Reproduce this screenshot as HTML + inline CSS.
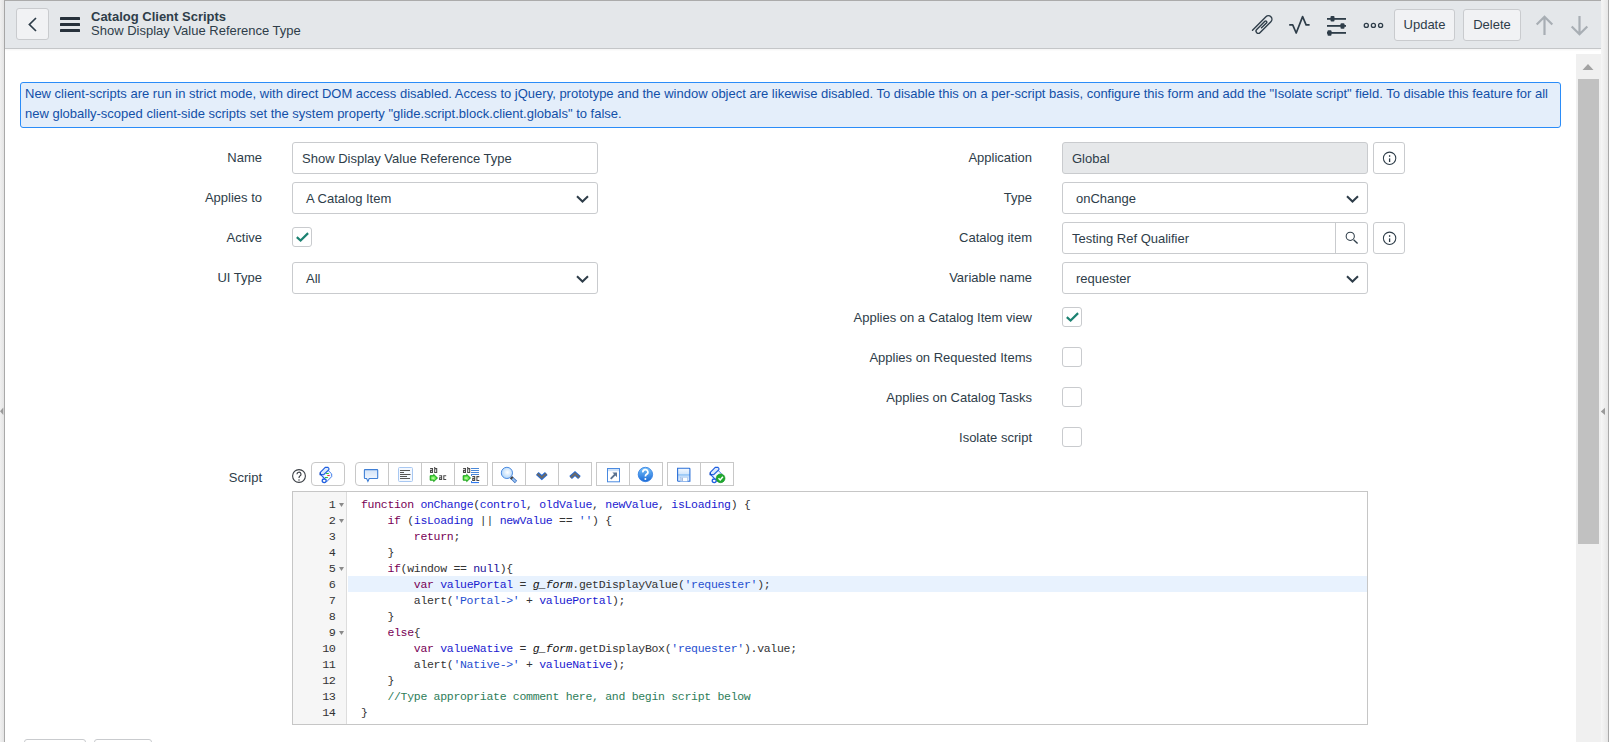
<!DOCTYPE html>
<html><head><meta charset="utf-8">
<style>
*{box-sizing:border-box}
html,body{margin:0;padding:0}
body{width:1609px;height:742px;overflow:hidden;position:relative;background:#fff;font-family:"Liberation Sans",sans-serif;font-size:13px;color:#2e3d49}
.abs{position:absolute}
#lstrip{left:0;top:0;width:5px;height:742px;background:linear-gradient(to right,#f0f0f0,#e4e4e4);border-right:1px solid #a9a9a9}
#rstrip{left:1601px;top:0;width:8px;height:742px;background:linear-gradient(to right,#f6f6f6,#e6e6e6);border-right:1px solid #a9a9a9}
#hdr{left:5px;top:0;width:1596px;height:49px;background:#e4e7ea;border-top:1px solid #ababab;border-bottom:1px solid #c4c6c8;box-shadow:0 1px 2px rgba(0,0,0,0.05)}
.btn{position:absolute;background:#f1f2f4;border:1px solid #c9cbce;border-radius:3px;color:#2e3d49;font-size:13px;text-align:center;line-height:30px}
.lbl{position:absolute;text-align:right;white-space:nowrap;line-height:20px;color:#2e3d49}
.inp{position:absolute;height:32px;border:1px solid #c9cbce;border-radius:3px;background:#fff;line-height:32px;padding-left:9px;white-space:nowrap;color:#2e3d49}
.chev{position:absolute;right:8px;top:12px;width:13px;height:8px}
.cb{position:absolute;width:20px;height:20px;border:1px solid #c9cbce;border-radius:3px;background:#fff}
#sb{left:1576px;top:54px;width:25px;height:688px;background:#f0f0f0}
#thumb{left:1578px;top:79px;width:21px;height:465px;background:#c1c1c1}
.tb{position:absolute;top:462px;height:24px;border:1px solid #c6c6c6;border-radius:4px;background:#fff}
.tbb{position:absolute;top:0;height:22px;width:33px;border-left:1px solid #c6c6c6}
.tbb:first-child{border-left:none}
.tg{position:absolute;top:462px;height:24px;border:1px solid #c8c8c8;background:#fff}
.tg i{position:absolute;top:0;width:1px;height:22px;background:#c8c8c8}
#ed{left:292px;top:491px;width:1076px;height:234px;border:1px solid #c6c6c6;background:#fff}
#gut{left:0;top:0;width:54px;height:232px;background:#f6f6f6;border-right:1px solid #dddddd}
.code{font-family:"Liberation Mono",monospace;font-size:11.5px;letter-spacing:-0.3px;line-height:16px;white-space:pre}
.ln{position:absolute;left:0;width:42.5px;text-align:right;color:#333;margin-top:0.5px;font-size:11.8px;letter-spacing:-0.4px}
.fold{position:absolute;left:45.6px;width:5px;height:4px}
.cl{position:absolute;left:68px;color:#333;margin-top:1px}
.k{color:#770055}.v{color:#1a1ad0}.s{color:#1f4fd0}.c{color:#2e7d59}.a{color:#221199}.i{font-style:italic;color:#111}
</style></head><body>
<div id="lstrip" class="abs"></div>
<div id="rstrip" class="abs"></div>
<svg class="abs" style="left:0;top:407px" width="4" height="9" viewBox="0 0 4 9"><path d="M0 4.3 L3.3 0.6 L3.3 8 Z" fill="#9a9a9a"/></svg>
<svg class="abs" style="left:1600px;top:407px" width="6" height="9" viewBox="0 0 6 9"><path d="M0.8 4.4 L5 0.8 L5 8 Z" fill="#9a9a9a"/></svg>
<div id="hdr" class="abs"></div>

<!-- header left -->
<div class="btn" style="left:16px;top:8px;width:33px;height:32px"></div>
<svg class="abs" style="left:16px;top:8px" width="33" height="32" viewBox="0 0 33 32"><path d="M20 10 L13.4 16.5 L20 23" fill="none" stroke="#2e3d49" stroke-width="1.7"/></svg>
<svg class="abs" style="left:60px;top:15px" width="20" height="18" viewBox="0 0 20 18"><rect x="0" y="2" width="20" height="3" rx="0.6" fill="#27313b"/><rect x="0" y="8" width="20" height="3" rx="0.6" fill="#27313b"/><rect x="0" y="14" width="20" height="3" rx="0.6" fill="#27313b"/></svg>
<div class="abs" style="left:91px;top:9px;font-weight:bold;line-height:15px;white-space:nowrap">Catalog Client Scripts</div>
<div class="abs" style="left:91px;top:23px;line-height:15px;white-space:nowrap">Show Display Value Reference Type</div>

<!-- header right icons -->
<svg class="abs" style="left:1248px;top:10px" width="30" height="30" viewBox="0 0 30 30"><g transform="translate(4.5 20.2) rotate(-45)" fill="none" stroke="#2e3d49" stroke-width="1.4" stroke-linecap="round"><path d="M0 0 L19 0 A3.5 3.5 0 0 1 19 7 L3.5 7 A2.25 2.25 0 0 1 3.5 2.5 L15 2.5 A1.1 1.1 0 0 1 15 4.7 L8 4.7"/></g></svg>
<svg class="abs" style="left:1288px;top:14px" width="23" height="22" viewBox="0 0 23 22"><path d="M1.2 10.9 L4.7 10.9 L8.2 19 L14.6 2.6 L18.1 10.9 L21.6 10.9" fill="none" stroke="#2e3d49" stroke-width="1.7" stroke-linejoin="round"/></svg>
<svg class="abs" style="left:1326px;top:15px" width="22" height="22" viewBox="0 0 22 22"><g fill="#2e3d49"><rect x="1" y="3" width="19" height="1.8"/><rect x="1" y="10" width="19" height="1.8"/><rect x="1" y="17" width="19" height="1.8"/><rect x="4.5" y="1" width="4" height="5.5" rx="1"/><rect x="14.5" y="8.3" width="4" height="5.5" rx="1"/><rect x="1.5" y="15.2" width="4" height="5.5" rx="1"/></g></svg>
<svg class="abs" style="left:1362px;top:20px" width="23" height="11" viewBox="0 0 23 11"><g fill="none" stroke="#2e3d49" stroke-width="1.3"><circle cx="4.3" cy="5.4" r="2.05"/><circle cx="11.4" cy="5.4" r="2.05"/><circle cx="18.6" cy="5.4" r="2.05"/></g></svg>
<svg class="abs" style="left:1534px;top:14px" width="22" height="23" viewBox="0 0 22 23"><path d="M10.5 21 L10.5 3 M2.7 10.5 L10.5 2.7 L18.3 10.5" fill="none" stroke="#a8aeb4" stroke-width="2.2"/></svg>
<svg class="abs" style="left:1569px;top:14px" width="22" height="23" viewBox="0 0 22 23"><path d="M10.5 2 L10.5 20 M2.7 12.5 L10.5 20.3 L18.3 12.5" fill="none" stroke="#a8aeb4" stroke-width="2.2"/></svg>
<!-- header right -->
<div class="btn" style="left:1394px;top:9px;width:61px;height:32px">Update</div>
<div class="btn" style="left:1463px;top:9px;width:58px;height:32px">Delete</div>

<!-- scrollbar -->
<div id="sb" class="abs"></div>
<svg class="abs" style="left:1582px;top:63px" width="12" height="8" viewBox="0 0 12 8"><path d="M0.5 7 L6 1 L11.5 7 Z" fill="#a3a3a3"/></svg>
<div id="thumb" class="abs"></div>

<!-- info box -->
<div class="abs" style="left:20px;top:82px;width:1541px;height:46px;border:1px solid #2a8cf8;border-radius:3px;background:#e4eefa;color:#1250a8;padding:1px 0 0 4px;line-height:20px">New client-scripts are run in strict mode, with direct DOM access disabled. Access to jQuery, prototype and the window object are likewise disabled. To disable this on a per-script basis, configure this form and add the "Isolate script" field. To disable this feature for all new globally-scoped client-side scripts set the system property "glide.script.block.client.globals" to false.</div>

<!-- left column -->
<div class="lbl" style="right:1347px;top:148px">Name</div>
<div class="inp" style="left:292px;top:142px;width:306px">Show Display Value Reference Type</div>
<div class="lbl" style="right:1347px;top:188px">Applies to</div>
<div class="inp" style="left:292px;top:182px;width:306px;padding-left:13px">A Catalog Item<svg class="chev" viewBox="0 0 13 8"><path d="M1 1.2 L6.5 6.5 L12 1.2" fill="none" stroke="#2e3d49" stroke-width="2"/></svg></div>
<div class="lbl" style="right:1347px;top:228px">Active</div>
<div class="cb" style="left:292px;top:227px"><svg class="abs" style="left:0;top:0" width="18" height="18" viewBox="0 0 18 18"><path d="M3.8 9.1 L7.6 12.5 L15.1 5.1" fill="none" stroke="#1c8272" stroke-width="2.2"/></svg></div>
<div class="lbl" style="right:1347px;top:268px">UI Type</div>
<div class="inp" style="left:292px;top:262px;width:306px;padding-left:13px">All<svg class="chev" viewBox="0 0 13 8"><path d="M1 1.2 L6.5 6.5 L12 1.2" fill="none" stroke="#2e3d49" stroke-width="2"/></svg></div>

<!-- right column -->
<div class="lbl" style="right:577px;top:148px">Application</div>
<div class="inp" style="left:1062px;top:142px;width:306px;background:#e6e8ea">Global</div>
<div class="btn" style="left:1373px;top:142px;width:32px;height:32px;background:#fff"></div>
<svg class="abs" style="left:1373px;top:142px" width="32" height="32" viewBox="0 0 32 32"><circle cx="16.6" cy="16.3" r="6.2" fill="none" stroke="#2e3d49" stroke-width="1.05"/><rect x="15.95" y="13.2" width="1.3" height="1.6" fill="#2e3d49"/><rect x="15.95" y="16.4" width="1.3" height="3.6" fill="#2e3d49"/></svg>
<div class="lbl" style="right:577px;top:188px">Type</div>
<div class="inp" style="left:1062px;top:182px;width:306px;padding-left:13px">onChange<svg class="chev" viewBox="0 0 13 8"><path d="M1 1.2 L6.5 6.5 L12 1.2" fill="none" stroke="#2e3d49" stroke-width="2"/></svg></div>
<div class="lbl" style="right:577px;top:228px">Catalog item</div>
<div class="inp" style="left:1062px;top:222px;width:306px">Testing Ref Qualifier</div>
<div class="abs" style="left:1335px;top:223px;width:1px;height:30px;background:#c9cbce"></div>
<div class="btn" style="left:1373px;top:222px;width:32px;height:32px;background:#fff"></div>
<svg class="abs" style="left:1373px;top:222px" width="32" height="32" viewBox="0 0 32 32"><circle cx="16.6" cy="16.3" r="6.2" fill="none" stroke="#2e3d49" stroke-width="1.05"/><rect x="15.95" y="13.2" width="1.3" height="1.6" fill="#2e3d49"/><rect x="15.95" y="16.4" width="1.3" height="3.6" fill="#2e3d49"/></svg>
<svg class="abs" style="left:1336px;top:223px" width="31" height="30" viewBox="0 0 31 30"><circle cx="14.25" cy="13.35" r="4.1" fill="none" stroke="#2e3d49" stroke-width="1.05"/><path d="M17.6 16.8 L21.6 20.5" stroke="#2e3d49" stroke-width="1.3" fill="none"/></svg>
<div class="lbl" style="right:577px;top:268px">Variable name</div>
<div class="inp" style="left:1062px;top:262px;width:306px;padding-left:13px">requester<svg class="chev" viewBox="0 0 13 8"><path d="M1 1.2 L6.5 6.5 L12 1.2" fill="none" stroke="#2e3d49" stroke-width="2"/></svg></div>
<div class="lbl" style="right:577px;top:308px">Applies on a Catalog Item view</div>
<div class="cb" style="left:1062px;top:307px"><svg class="abs" style="left:0;top:0" width="18" height="18" viewBox="0 0 18 18"><path d="M3.8 9.1 L7.6 12.5 L15.1 5.1" fill="none" stroke="#1c8272" stroke-width="2.2"/></svg></div>
<div class="lbl" style="right:577px;top:348px">Applies on Requested Items</div>
<div class="cb" style="left:1062px;top:347px"></div>
<div class="lbl" style="right:577px;top:388px">Applies on Catalog Tasks</div>
<div class="cb" style="left:1062px;top:387px"></div>
<div class="lbl" style="right:577px;top:428px">Isolate script</div>
<div class="cb" style="left:1062px;top:427px"></div>

<!-- script -->
<!-- toolbar -->
<svg class="abs" style="left:291px;top:468px" width="16" height="16" viewBox="0 0 16 16"><circle cx="8" cy="8" r="6.4" fill="none" stroke="#3a3f45" stroke-width="1.1"/><path d="M6 6.3 A2 2 0 1 1 8.9 8 C8.2 8.4 8 8.9 8 10" fill="none" stroke="#3a3f45" stroke-width="1.2"/><circle cx="8" cy="12" r="0.75" fill="#3a3f45"/></svg>
<div class="tg" style="left:311px;width:34px;border-radius:4px"></div>
<svg class="abs" style="left:311px;top:462px" width="34" height="24" viewBox="0 0 34 24">
 <defs>
  <linearGradient id="gs" x1="0" y1="0" x2="1" y2="1"><stop offset="0" stop-color="#ffffff"/><stop offset="1" stop-color="#b9d6fb"/></linearGradient>
  <g id="scroll">
   <path d="M4.5 10.4 L8.8 14.9 L11.2 17.6 L15.7 12.6 L15.7 10 L11.9 6.4 Z" fill="#f1f7ff"/>
   <path d="M4.5 10.4 L8.8 14.9" fill="none" stroke="#1f5fe0" stroke-width="1.2"/>
   <path d="M12 6.3 L15.7 9.9 L15.7 12.6 L10.4 18" fill="none" stroke="#3070e8" stroke-width="0.9"/>
   <path d="M4.3 8.4 L9.3 3.4 L11.9 3.2 L12.9 4.4 L12.9 5.7 L7.7 10.7 L4.3 10.4 Z" fill="url(#gs)" stroke="#1f5fe0" stroke-width="1.1"/>
   <path d="M4.3 8.6 L4.3 10.6 L5.6 10.6" fill="none" stroke="#1448c8" stroke-width="1.4"/>
   <ellipse cx="8.2" cy="16.8" rx="2" ry="1.8" fill="#fff" stroke="#1f5fe0" stroke-width="1.3"/>
  </g>
 </defs>
 <g transform="translate(5 2)">
  <use href="#scroll"/>
  <rect x="10.1" y="9.1" width="2.7" height="0.9" fill="#1fc01f"/>
  <rect x="11.3" y="11" width="2.4" height="0.9" fill="#e8201a"/>
  <rect x="8.9" y="13.1" width="3" height="0.9" fill="#1fc01f"/>
 </g>
</svg>

<div class="tg" style="left:355px;width:133px;border-radius:4px 0 0 4px"><i style="left:32px"></i><i style="left:65px"></i><i style="left:98px"></i></div>
<svg class="abs" style="left:355px;top:462px" width="133" height="24" viewBox="0 0 133 24">
 <defs>
  <linearGradient id="gb" x1="0" y1="0" x2="0" y2="1"><stop offset="0" stop-color="#d3e3f8"/><stop offset="1" stop-color="#f8fbff"/></linearGradient>
  <radialGradient id="gr" cx="0.4" cy="0.55" r="0.6"><stop offset="0" stop-color="#c8ffb0"/><stop offset="0.6" stop-color="#4fe03a"/><stop offset="1" stop-color="#18b818"/></radialGradient>
 </defs>
 <!-- comment -->
 <path d="M10 7.6 Q9.4 7.6 9.4 8.3 L9.4 15.8 Q9.4 16.5 10 16.5 L11.6 16.5 L12.9 19.4 L14.2 16.5 L22.1 16.5 Q22.7 16.5 22.7 15.8 L22.7 8.3 Q22.7 7.6 22.1 7.6 Z" fill="url(#gb)" stroke="#3f7fd6" stroke-width="1.1"/>
 <!-- format -->
 <rect x="43.5" y="5.5" width="14" height="14" rx="1" fill="#f4f8fe" stroke="#a8c8f2" stroke-width="1"/>
 <g fill="#555"><rect x="45" y="8" width="10" height="1"/><rect x="45" y="10" width="4" height="1"/><rect x="45" y="12" width="10.5" height="1"/><rect x="45" y="14" width="7" height="1"/><rect x="45" y="16" width="10" height="1"/></g>
 <!-- replace -->
 <path d="M75.10 6.60 H77.50 V10.40 H75.50 V8.60 H77.50 M79.70 5.00 V10.40 H81.70 V6.60 H79.70" fill="none" stroke="#4a4a4a" stroke-width="1.05"/>
 <path d="M75.20 13.70 L78.70 13.70 L78.70 12.40 L82.50 16.00 L78.70 19.60 L78.70 18.20 L75.20 18.20 Z" fill="url(#gr)" stroke="#0c9c0c" stroke-width="0.9"/>
 <path d="M84.20 13.70 H86.60 V17.50 H84.60 V15.70 H86.60 M91.20 13.70 H88.80 V17.50 H91.20" fill="none" stroke="#4a4a4a" stroke-width="1.05"/>
 <path d="M108.10 6.60 H110.50 V10.40 H108.50 V8.60 H110.50 M112.70 5.00 V10.40 H114.70 V6.60 H112.70" fill="none" stroke="#4a4a4a" stroke-width="1.05"/>
 <g fill="#4a88d8"><rect x="116" y="6" width="8" height="1"/><rect x="116" y="8" width="8" height="1"/><rect x="116" y="10" width="8" height="1"/><rect x="116" y="12" width="8" height="1"/><rect x="116" y="12" width="1" height="2"/><rect x="116" y="19" width="1" height="2"/><rect x="116" y="20" width="8" height="1.1" fill="#2f7af0"/></g>
 <path d="M108.20 13.70 L111.70 13.70 L111.70 12.40 L115.50 16.00 L111.70 19.60 L111.70 18.20 L108.20 18.20 Z" fill="url(#gr)" stroke="#0c9c0c" stroke-width="0.9"/>
 <path d="M117.30 14.60 H119.70 V18.40 H117.70 V16.60 H119.70 M124.30 14.60 H121.90 V18.40 H124.30" fill="none" stroke="#4a4a4a" stroke-width="1.05"/>
</svg>

<div class="tg" style="left:492px;width:100px;border-radius:0"><i style="left:32px"></i><i style="left:65px"></i></div>
<svg class="abs" style="left:492px;top:462px" width="100" height="24" viewBox="0 0 100 24">
 <defs><radialGradient id="gm" cx="0.55" cy="0.45" r="0.6"><stop offset="0" stop-color="#ffffff"/><stop offset="1" stop-color="#a9d2fa"/></radialGradient></defs>
 <circle cx="14.9" cy="10.9" r="5.6" fill="url(#gm)" stroke="#4a8ae0" stroke-width="1"/>
 <path d="M19.2 15.4 L24 20" stroke="#3b6fbf" stroke-width="3.2" stroke-linecap="butt"/>
 <path d="M19.7 15.9 L23.6 19.6" stroke="#9cc6f5" stroke-width="1.6"/>
 <path d="M19 15.2 L20.4 16.6" stroke="#444" stroke-width="3"/>
 <path d="M45.3 11.6 L49.8 15.6 L54.3 11.6" fill="none" stroke="#1e6be0" stroke-width="4" stroke-linejoin="miter" stroke-miterlimit="3"/>
 <path d="M45.3 11.6 L49.8 15.6 L54.3 11.6" fill="none" stroke="#6a6a6a" stroke-width="2.2" stroke-linejoin="miter" stroke-miterlimit="3"/>
 <path d="M78.6 15.6 L83 11.6 L87.4 15.6" fill="none" stroke="#1e6be0" stroke-width="4" stroke-linejoin="miter" stroke-miterlimit="3"/>
 <path d="M78.6 15.6 L83 11.6 L87.4 15.6" fill="none" stroke="#6a6a6a" stroke-width="2.2" stroke-linejoin="miter" stroke-miterlimit="3"/>
</svg>

<div class="tg" style="left:596px;width:67px;border-radius:0"><i style="left:32px"></i></div>
<svg class="abs" style="left:596px;top:462px" width="67" height="24" viewBox="0 0 67 24">
 <defs><linearGradient id="gh" x1="0" y1="0" x2="0" y2="1"><stop offset="0" stop-color="#79c3fb"/><stop offset="1" stop-color="#1868d6"/></linearGradient></defs>
 <rect x="11.5" y="6.5" width="12" height="13.3" fill="#fff" stroke="#4a8ae0" stroke-width="1"/>
 <rect x="12" y="7" width="11" height="2.2" fill="#cfe2f8"/>
 <path d="M14.7 16.8 L20 11.5" stroke="#5b7290" stroke-width="1.8"/>
 <path d="M16.4 10.6 L21 10.6 L21 15.2 Z" fill="#5b7290"/>
 <circle cx="49.4" cy="12.5" r="7.2" fill="url(#gh)" stroke="#2a78e0" stroke-width="0.8"/>
 <path d="M46.9 10.4 A2.5 2.5 0 1 1 50.5 12.3 C49.6 12.9 49.4 13.4 49.4 14.6" fill="none" stroke="#fff" stroke-width="1.7"/>
 <circle cx="49.4" cy="17" r="1" fill="#fff"/>
</svg>

<div class="tg" style="left:667px;width:67px;border-radius:0"><i style="left:32px"></i></div>
<svg class="abs" style="left:667px;top:462px" width="67" height="24" viewBox="0 0 67 24">
 <defs><linearGradient id="gf" x1="0" y1="0" x2="0" y2="1"><stop offset="0" stop-color="#f4f9ff"/><stop offset="0.4" stop-color="#d6e8fc"/><stop offset="0.5" stop-color="#8cc2f6"/><stop offset="0.62" stop-color="#c6def9"/><stop offset="1" stop-color="#e6f0fc"/></linearGradient></defs>
 <path d="M10.6 6.3 L22.4 6.3 L22.9 6.8 L22.9 19.3 L11.1 19.3 L10.6 18.8 Z" fill="url(#gf)" stroke="#2a6fd8" stroke-width="1.1"/>
 <rect x="13.6" y="15.2" width="6.8" height="4.1" fill="#fff" stroke="#9cc0ee" stroke-width="0.6"/>
 <rect x="14.6" y="15.8" width="1" height="3.2" fill="#6a8fc8"/>
 <g transform="translate(39 2)"><use href="#scroll"/></g>
 <circle cx="53.6" cy="16.3" r="4.4" fill="#1faa2f" stroke="#138a20" stroke-width="0.6"/>
 <path d="M51.5 16.3 L53.2 18 L55.9 14.8" fill="none" stroke="#fff" stroke-width="1.5"/>
</svg>

<div class="lbl" style="right:1347px;top:468px">Script</div>

<div id="ed" class="abs">
 <div id="gut" class="abs"></div>
<div class="code ln" style="top:4px">1</div>
<svg class="fold" style="top:11px" viewBox="0 0 5 4"><path d="M0 0 L5 0 L2.5 4Z" fill="#8a8a8a"/></svg>
<div class="code cl" style="top:4px"><span class="k">function</span> <span class="v">onChange</span>(<span class="v">control</span>, <span class="v">oldValue</span>, <span class="v">newValue</span>, <span class="v">isLoading</span>) {</div>
<div class="code ln" style="top:20px">2</div>
<svg class="fold" style="top:27px" viewBox="0 0 5 4"><path d="M0 0 L5 0 L2.5 4Z" fill="#8a8a8a"/></svg>
<div class="code cl" style="top:20px">    <span class="k">if</span> (<span class="v">isLoading</span> || <span class="v">newValue</span> == <span class="s">''</span>) {</div>
<div class="code ln" style="top:36px">3</div>
<div class="code cl" style="top:36px">        <span class="k">return</span>;</div>
<div class="code ln" style="top:52px">4</div>
<div class="code cl" style="top:52px">    }</div>
<div class="code ln" style="top:68px">5</div>
<svg class="fold" style="top:75px" viewBox="0 0 5 4"><path d="M0 0 L5 0 L2.5 4Z" fill="#8a8a8a"/></svg>
<div class="code cl" style="top:68px">    <span class="k">if</span>(window == <span class="a">null</span>){</div>
<div class="abs" style="left:55px;top:84px;width:1019px;height:16px;background:#e8f2fe"></div>
<div class="code ln" style="top:84px">6</div>
<div class="code cl" style="top:84px">        <span class="k">var</span> <span class="v">valuePortal</span> = <span class="i">g_form</span>.getDisplayValue(<span class="s">'requester'</span>);</div>
<div class="code ln" style="top:100px">7</div>
<div class="code cl" style="top:100px">        alert(<span class="s">'Portal-&gt;'</span> + <span class="v">valuePortal</span>);</div>
<div class="code ln" style="top:116px">8</div>
<div class="code cl" style="top:116px">    }</div>
<div class="code ln" style="top:132px">9</div>
<svg class="fold" style="top:139px" viewBox="0 0 5 4"><path d="M0 0 L5 0 L2.5 4Z" fill="#8a8a8a"/></svg>
<div class="code cl" style="top:132px">    <span class="k">else</span>{</div>
<div class="code ln" style="top:148px">10</div>
<div class="code cl" style="top:148px">        <span class="k">var</span> <span class="v">valueNative</span> = <span class="i">g_form</span>.getDisplayBox(<span class="s">'requester'</span>).value;</div>
<div class="code ln" style="top:164px">11</div>
<div class="code cl" style="top:164px">        alert(<span class="s">'Native-&gt;'</span> + <span class="v">valueNative</span>);</div>
<div class="code ln" style="top:180px">12</div>
<div class="code cl" style="top:180px">    }</div>
<div class="code ln" style="top:196px">13</div>
<div class="code cl" style="top:196px">    <span class="c">//Type appropriate comment here, and begin script below</span></div>
<div class="code ln" style="top:212px">14</div>
<div class="code cl" style="top:212px">}</div>
</div>

<!-- bottom buttons -->
<div class="btn" style="left:24px;top:739px;width:62px;height:32px;background:#fff"></div>
<div class="btn" style="left:94px;top:739px;width:58px;height:32px;background:#fff"></div>
</body></html>
